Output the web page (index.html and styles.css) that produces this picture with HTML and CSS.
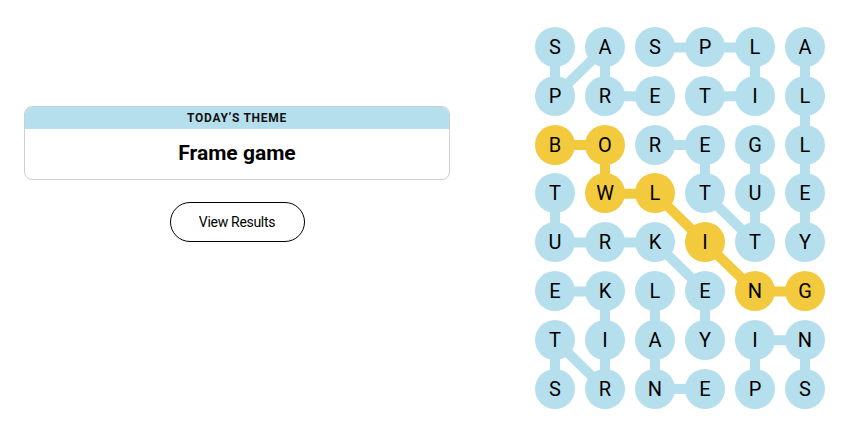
FILE: index.html
```html
<!DOCTYPE html>
<html lang="en">
<head>
<meta charset="utf-8">
<title>Strands</title>
<link rel="stylesheet" href="styles.css">
</head>
<body>
<main class="page">
  <section class="side">
    <div class="theme-card">
      <div class="theme-label">TODAY’S THEME</div>
      <div class="theme-name">Frame game</div>
    </div>
    <button class="results-btn">View Results</button>
  </section>
  <section class="board">
    <svg class="links" width="300" height="390.4" viewBox="0 0 300 390.4">
      <g class="blue">
        <polyline points="25,24.4 25,73.2 75,24.4 75,73.2 125,73.2"/>
        <polyline points="125,24.4 175,24.4 225,24.4 225,73.2 175,73.2"/>
        <polyline points="275,24.4 275,219.6"/>
        <polyline points="225,122 225,219.6 175,170.8 175,122 125,122"/>
        <polyline points="25,170.8 25,219.6 125,219.6 175,268.4 175,317.2"/>
        <polyline points="25,366 25,317.2 75,366 75,268.4 25,268.4"/>
        <polyline points="125,268.4 125,366 175,366"/>
        <polyline points="225,366 225,317.2 275,317.2 275,366"/>
      </g>
      <g class="gold">
        <polyline points="25,122 75,122 75,170.8 125,170.8 175,219.6 225,268.4 275,268.4"/>
      </g>
    </svg>
    <div class="grid">
      <div class="cell"><span class="dot">S</span></div>
      <div class="cell"><span class="dot">A</span></div>
      <div class="cell"><span class="dot">S</span></div>
      <div class="cell"><span class="dot">P</span></div>
      <div class="cell"><span class="dot">L</span></div>
      <div class="cell"><span class="dot">A</span></div>

      <div class="cell"><span class="dot">P</span></div>
      <div class="cell"><span class="dot">R</span></div>
      <div class="cell"><span class="dot">E</span></div>
      <div class="cell"><span class="dot">T</span></div>
      <div class="cell"><span class="dot">I</span></div>
      <div class="cell"><span class="dot">L</span></div>

      <div class="cell"><span class="dot gold">B</span></div>
      <div class="cell"><span class="dot gold">O</span></div>
      <div class="cell"><span class="dot">R</span></div>
      <div class="cell"><span class="dot">E</span></div>
      <div class="cell"><span class="dot">G</span></div>
      <div class="cell"><span class="dot">L</span></div>

      <div class="cell"><span class="dot">T</span></div>
      <div class="cell"><span class="dot gold">W</span></div>
      <div class="cell"><span class="dot gold">L</span></div>
      <div class="cell"><span class="dot">T</span></div>
      <div class="cell"><span class="dot">U</span></div>
      <div class="cell"><span class="dot">E</span></div>

      <div class="cell"><span class="dot">U</span></div>
      <div class="cell"><span class="dot">R</span></div>
      <div class="cell"><span class="dot">K</span></div>
      <div class="cell"><span class="dot gold">I</span></div>
      <div class="cell"><span class="dot">T</span></div>
      <div class="cell"><span class="dot">Y</span></div>

      <div class="cell"><span class="dot">E</span></div>
      <div class="cell"><span class="dot">K</span></div>
      <div class="cell"><span class="dot">L</span></div>
      <div class="cell"><span class="dot">E</span></div>
      <div class="cell"><span class="dot gold">N</span></div>
      <div class="cell"><span class="dot gold">G</span></div>

      <div class="cell"><span class="dot">T</span></div>
      <div class="cell"><span class="dot">I</span></div>
      <div class="cell"><span class="dot">A</span></div>
      <div class="cell"><span class="dot">Y</span></div>
      <div class="cell"><span class="dot">I</span></div>
      <div class="cell"><span class="dot">N</span></div>

      <div class="cell"><span class="dot">S</span></div>
      <div class="cell"><span class="dot">R</span></div>
      <div class="cell"><span class="dot">N</span></div>
      <div class="cell"><span class="dot">E</span></div>
      <div class="cell"><span class="dot">P</span></div>
      <div class="cell"><span class="dot">S</span></div>
    </div>
  </section>
</main>
</body>
</html>
```
FILE: styles.css
```css
* { box-sizing: border-box; }

html, body {
  margin: 0;
  padding: 0;
  background: #ffffff;
  color: #000000;
  font-family: Roboto, "Liberation Sans", sans-serif;
}

.page {
  display: flex;
  align-items: flex-start;
  width: 851px;
  height: 434px;
}

.side {
  display: flex;
  flex-direction: column;
  align-items: center;
  width: 426px;
  margin: 106px 0 0 24px;
}

.theme-card {
  width: 100%;
  border: 1px solid #cfcfcf;
  border-radius: 8px;
  overflow: hidden;
  text-align: center;
}

.theme-label {
  background: #b6dfed;
  height: 22px;
  line-height: 23px;
  font-size: 12px;
  font-weight: 700;
  letter-spacing: 0.7px;
  color: #111;
}

.theme-name {
  height: 50px;
  line-height: 49px;
  font-size: 21px;
  font-weight: 700;
}

.results-btn {
  margin-top: 22px;
  width: 135px;
  height: 40px;
  border: 1px solid #000;
  border-radius: 20px;
  background: #fff;
  color: #000;
  font-family: Roboto, "Liberation Sans", sans-serif;
  font-size: 14px;
  letter-spacing: -0.3px;
  padding: 0;
}

.board {
  position: relative;
  margin: 22.6px 0 0 80px;
  width: 300px;
  height: 390.4px;
}

.links {
  position: absolute;
  left: 0;
  top: 0;
}

.links polyline {
  fill: none;
  stroke-width: 10;
  stroke-linejoin: round;
  stroke-linecap: round;
}

.links .blue polyline { stroke: #b6dfed; }
.links .gold polyline { stroke: #f3c93d; }

.grid {
  position: relative;
  display: grid;
  grid-template-columns: repeat(6, 50px);
  grid-template-rows: repeat(8, 48.8px);
}

.cell {
  display: flex;
  align-items: center;
  justify-content: center;
}

.dot {
  width: 40px;
  height: 40px;
  border-radius: 50%;
  background: #b6dfed;
  display: flex;
  align-items: center;
  justify-content: center;
  font-size: 20px;
  font-weight: 400;
  color: #000;
}

.dot.gold { background: #f3c93d; }
```
